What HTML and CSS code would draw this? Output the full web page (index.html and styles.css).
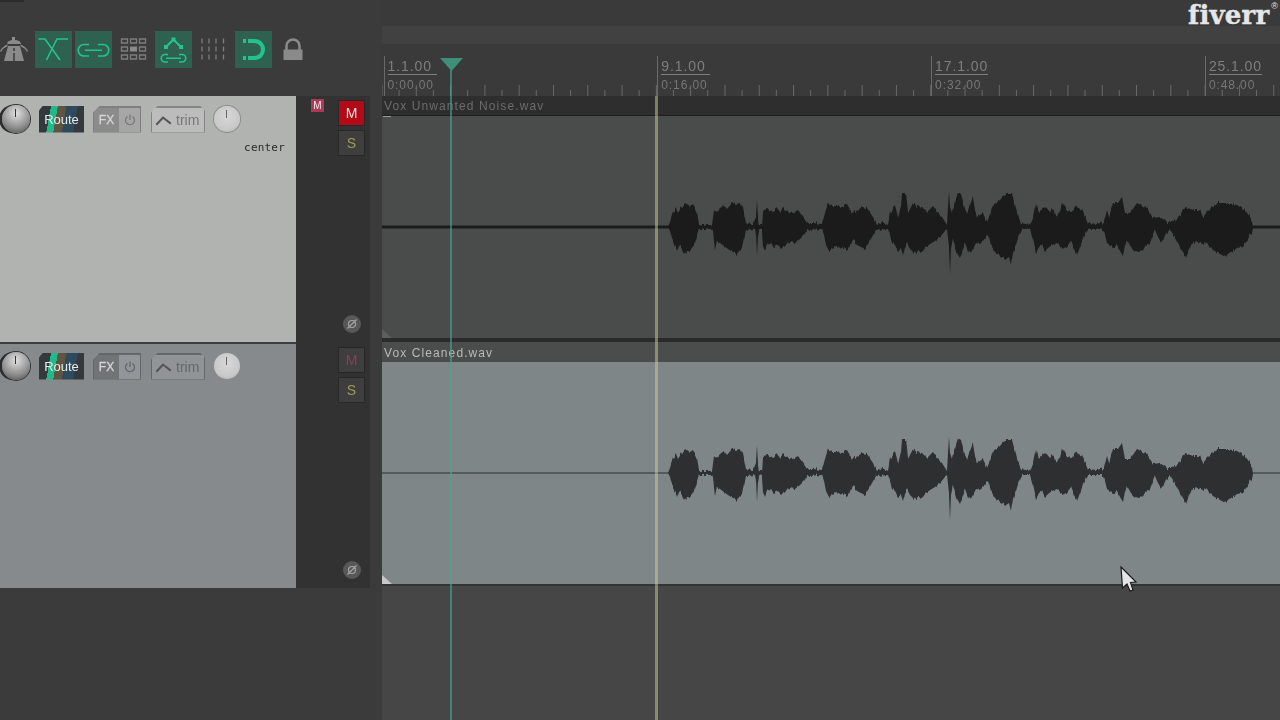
FILE: index.html
```html
<!DOCTYPE html>
<html lang="en">

<head>
    <meta charset="UTF-8">
    <title>Vox Cleaned</title>
    <link rel="stylesheet" href="styles.css">
</head>

<body>
    <div class="app">
        <!-- left column: toolbar and track panels -->
        <div class="side">
            <div class="toolbar">
                <span class="tool road">
                    <svg width="28" height="26" viewBox="0 0 28 26">
                        <path class="g-fill" d="M12 0h3v3h-3zM8 4.500Q14 1 20 4.500L21 7H7zM0 14Q3 8.500 8 7.500L7 9.500Q3 11 1 15zM28 14Q25 8.500 20 7.500L21 9.500Q25 11 27 15zM8 9h12l4 15H4z" />
                        <path class="road-line" d="M14 11v3M14 16v8" />
                    </svg>
                </span>
                <span class="tool on first">
                    <svg width="37" height="37" viewBox="0 0 37 37">
                        <path class="g-line" d="M3.500 8H10L25 29M33 8H22L11.500 29" />
                    </svg>
                </span>
                <span class="tool on">
                    <svg width="37" height="37" viewBox="0 0 37 37">
                        <path class="g-line" d="M14 13.500H9a5.700 5.700 0 0 0 0 11.500h5M23 13.500h5a5.700 5.700 0 0 1 0 11.500h-5M10 19.300h17" />
                    </svg>
                </span>
                <span class="tool plain">
                    <svg width="37" height="37" viewBox="0 0 37 37">
                        <path class="grey-line" d="M6.500 8h6v4h-6zM15.500 8h6v4h-6zM24.500 8h6v4h-6zM6.500 16h6v4h-6zM24.500 16h6v4h-6zM6.500 24h6v4h-6zM15.500 24h6v4h-6zM24.500 24h6v4h-6z" />
                        <path class="g-fill" d="M15 15.500h7v5h-7z" />
                    </svg>
                </span>
                <span class="tool on">
                    <svg width="37" height="37" viewBox="0 0 37 37">
                        <path class="g-line thick" d="M11 16l7.500-7.500L26 16" />
                        <path class="g-solid" d="M9 14h4v4H9zM16.500 6.500h4v4h-4zM24 14h4v4h-4z" />
                        <path class="g-line" d="M13 23.500H10a3.700 3.700 0 0 0 0 7.500h3M24 23.500h3a3.700 3.700 0 0 1 0 7.500h-3M11 27.300h15" />
                    </svg>
                </span>
                <span class="tool plain">
                    <svg width="37" height="37" viewBox="0 0 37 37">
                        <path class="grey-line" d="M7 7.500v5M14 7.500v5M21 7.500v5M28.500 7.500v5M7 15.500v5M14 15.500v5M21 15.500v5M28.500 15.500v5M7 23.500v5M14 23.500v5M21 23.500v5M28.500 23.500v5" />
                    </svg>
                </span>
                <span class="tool on">
                    <svg width="37" height="37" viewBox="0 0 37 37">
                        <path class="g-line magnet" d="M13 10h6c12 0 12 17 0 17h-6" />
                        <path class="g-solid" d="M8 8h3v4H8zM8 25h3v4H8z" />
                    </svg>
                </span>
                <span class="tool plain">
                    <svg width="37" height="37" viewBox="0 0 37 37">
                        <path class="shackle" d="M11.500 19v-4a6.500 6.500 0 0 1 13 0v4" />
                        <path class="g-fill" d="M8.500 18.500h19V29h-19z" />
                    </svg>
                </span>
            </div>

            <div class="track-head one">
                <div class="tcp">
                    <div class="tcp-row">
                        <span class="knob"></span>
                        <span class="route"><b>Route</b></span>
                        <span class="fx"><i>FX</i><em>
                                <svg width="14" height="14" viewBox="0 0 14 14"><path class="pow" d="M4.500 3.500a4.500 4.500 0 1 0 5 0M7 1.500V7" /></svg>
                            </em></span>
                        <span class="trim">
                            <svg width="18" height="12" viewBox="0 0 18 12"><path class="env" d="M2 10l6-6.500 7 5.500" /></svg>
                            trim</span>
                        <span class="knob small"></span>
                    </div>
                    <div class="pan">center</div>
                </div>
                <div class="mcp">
                    <span class="badge">M</span>
                    <span class="btn mute-on">M</span>
                    <span class="btn solo">S</span>
                    <span class="phase"><svg width="12" height="12" viewBox="0 0 12 12"><path class="phase-mark" d="M10.500 1.500l-9 9M9.500 6a3.500 3.500 0 0 1-7 0 3.500 3.500 0 0 1 7 0z" /></svg></span>
                </div>
            </div>

            <div class="track-head two">
                <div class="tcp">
                    <div class="tcp-row">
                        <span class="knob"></span>
                        <span class="route"><b>Route</b></span>
                        <span class="fx"><i>FX</i><em>
                                <svg width="14" height="14" viewBox="0 0 14 14"><path class="pow" d="M4.500 3.500a4.500 4.500 0 1 0 5 0M7 1.500V7" /></svg>
                            </em></span>
                        <span class="trim">
                            <svg width="18" height="12" viewBox="0 0 18 12"><path class="env" d="M2 10l6-6.500 7 5.500" /></svg>
                            trim</span>
                        <span class="knob small"></span>
                    </div>
                </div>
                <div class="mcp">
                    <span class="btn mute">M</span>
                    <span class="btn solo">S</span>
                    <span class="phase"><svg width="12" height="12" viewBox="0 0 12 12"><path class="phase-mark" d="M10.500 1.500l-9 9M9.500 6a3.500 3.500 0 0 1-7 0 3.500 3.500 0 0 1 7 0z" /></svg></span>
                </div>
            </div>
        </div>

        <!-- right column: ruler and items -->
        <div class="arrange">
            <div class="ruler">
                <div class="ruler-band"></div>
                <div class="marks">
                    <div class="mark"><span class="bar-no">1.1.00</span><span class="time">0:00.00</span></div>
                    <div class="mark"><span class="bar-no">9.1.00</span><span class="time">0:16.00</span></div>
                    <div class="mark"><span class="bar-no">17.1.00</span><span class="time">0:32.00</span></div>
                    <div class="mark"><span class="bar-no">25.1.00</span><span class="time">0:48.00</span></div>
                </div>
            </div>

            <svg class="wave-defs" width="0" height="0">
                <defs>
                    <filter id="jag" x="0" y="-30%" width="100%" height="160%" color-interpolation-filters="sRGB">
                        <feTurbulence type="fractalNoise" baseFrequency="0.45 0.002" numOctaves="2" seed="4" />
                        <feColorMatrix values="0 0 0 0 .5  0 1 0 0 0  0 0 0 0 0  0 0 0 0 1" result="noise" />
                        <feDisplacementMap in="SourceGraphic" in2="noise" scale="7" xChannelSelector="R" yChannelSelector="G" />
                    </filter>
                    <g id="wave" filter="url(#jag)">
                        <polygon points="668,0 670,-5 673,-15 676,-19 678,-14 681,-19 683,-22 687,-23 690,-21 693,-23 697,-14 699,-2 712,-2 714,-17 716,-14 720,-19 724,-22 727,-18 732,-24 736,-23 740,-24 743,-19 746,-4 753,-3 756,-10 757,-27 758,-10 759,-2 762,-2 763,-17 768,-18 772,-15 777,-19 780,-15 783,-19 788,-15 793,-14 798,-17 803,-10 807,-4 813,-4 822,-3 825,-14 828,-24 832,-21 837,-21 842,-20 847,-23 852,-14 855,-15 862,-20 867,-19 873,-10 877,-2 882,-5 888,-2 890,-14 895,-22 898,-10 901,-20 902,-34 906,-34 908,-14 913,-24 917,-21 922,-20 927,-15 933,-21 938,-14 942,-10 947,-2 948,-20 949,-36 950,-20 952,-14 955,-25 958,-35 961,-33 964,-20 967,-14 970,-22 973,-30 975,-18 977,-10 983,-14 987,-5 990,-12 993,-22 1000,-27 1005,-33 1012,-33 1015,-22 1017,-14 1021,-4 1030,-2 1033,-10 1036,-24 1039,-14 1045,-21 1050,-15 1053,-18 1057,-10 1060,-16 1062,-25 1067,-17 1072,-14 1075,-21 1082,-17 1086,-9 1088,-4 1097,-3 1104,-5 1107,-17 1109,-10 1113,-24 1118,-24 1122,-30 1125,-14 1130,-14 1137,-24 1147,-19 1153,-9 1160,-10 1167,-5 1172,-5 1178,-9 1185,-20 1193,-17 1200,-17 1203,-10 1207,-15 1212,-20 1217,-24 1222,-24 1227,-24 1232,-23 1237,-22 1245,-17 1252,-7 1253,0" />
                        <polygon points="668,0 670,4 672,12 675,18 677,24 679,18 682,22 685,28 687,24 690,24 692,22 695,16 697,9 699,2 712,2 713,4 715,24 717,14 720,16 724,19 728,22 731,24 735,26 737,28 739,24 742,21 744,12 746,3 755,2 756,8 757,29 758,8 759,2 762,3 763,18 765,24 767,18 770,16 774,20 778,18 782,22 785,18 790,15 795,16 800,12 804,8 807,3 822,2 824,8 826,18 829,24 832,22 835,19 838,21 842,20 847,23 850,18 853,13 857,18 861,20 865,22 868,17 872,10 876,3 888,2 890,8 892,15 895,18 898,24 901,22 903,28 905,20 907,16 910,22 914,26 918,24 922,25 926,20 930,17 935,14 940,10 945,4 947,2 949,20 950,46 951,22 953,12 956,24 960,31 963,22 965,16 968,24 970,27 973,22 976,16 980,17 983,14 986,10 988,8 991,18 995,25 999,28 1002,30 1006,32 1009,30 1011,38 1013,26 1016,18 1019,8 1022,2 1030,2 1033,12 1036,26 1039,20 1042,18 1045,24 1048,21 1052,18 1057,16 1061,20 1065,22 1068,18 1071,14 1074,22 1077,28 1080,20 1083,12 1086,5 1088,2 1103,2 1105,8 1107,16 1110,18 1113,21 1117,18 1120,24 1123,29 1125,18 1127,13 1131,20 1135,24 1140,25 1145,20 1150,16 1153,8 1155,3 1158,10 1161,15 1164,12 1167,5 1170,3 1173,8 1176,12 1180,20 1183,26 1186,30 1189,22 1193,16 1198,15 1203,17 1206,16 1210,20 1213,23 1218,26 1222,28 1225,30 1229,26 1233,24 1237,21 1242,20 1247,14 1250,8 1252,5 1253,0" />
                    </g>
                </defs>
            </svg>

            <div class="lane one">
                <div class="item-title">Vox Unwanted Noise.wav</div>
                <div class="item-body">
                    <span class="tick-top"></span>
                    <svg class="peaks" viewBox="382 -50 898 100" width="898" height="100">
                        <rect class="center-line" x="382" y="-1.500" width="898" height="3" />
                        <use href="#wave" />
                    </svg>
                    <span class="fade"></span>
                </div>
            </div>

            <div class="lane two">
                <div class="item-title">Vox Cleaned.wav</div>
                <div class="item-body">
                    <svg class="peaks" viewBox="382 -50 898 100" width="898" height="100">
                        <rect class="center-line" x="382" y="-0.500" width="898" height="1" />
                        <use href="#wave" />
                    </svg>
                    <span class="fade"></span>
                </div>
            </div>

            <!-- cursors run over the whole arrange view -->
            <div class="edit-cursor"></div>
            <div class="playhead"></div>
            <div class="playhead-cap"></div>
        </div>
    </div>

    <div class="logo">fiverr<sup>®</sup></div>

    <svg class="pointer" width="20" height="28" viewBox="0 0 20 28">
        <path d="M2 1l15 15-5.500.5L14 24l-3 1-3-7-4.500 4z" />
    </svg>
</body>

</html>
```

FILE: styles.css
```css
* {
    box-sizing: border-box;
}

html,
body {
    margin: 0;
    height: 100%;
    overflow: hidden;
    background: #3b3b3b;
}

body {
    position: relative;
    font-family: "Liberation Sans", Arial, sans-serif;
}

.app {
    display: flex;
    width: 1280px;
    height: 720px;
    filter: blur(.35px);
}

.side {
    width: 382px;
    background: #3b3b3b;
}

/* toolbar */
.toolbar {
    position: relative;
    display: flex;
    align-items: flex-start;
    height: 96px;
    padding-top: 31px;
}

.toolbar::before {
    content: "";
    position: absolute;
    left: 0;
    top: 0;
    width: 24px;
    height: 2px;
    background: #2c2c2c;
}

.tool {
    display: block;
    width: 37px;
    height: 37px;
    margin-right: 3px;
}

.tool svg {
    display: block;
}

.tool.road {
    width: 28px;
    margin-right: 7px;
    padding-top: 6px;
}

.tool.on {
    background: #2f6151;
}

.tool.plain {
    margin-right: 3px;
}

.g-fill {
    fill: #8a8a8a;
}

.road-line {
    fill: none;
    stroke: #3b3b3b;
    stroke-width: 1.5;
}

.g-line {
    fill: none;
    stroke: #25c38c;
    stroke-width: 1.600;
}

.g-line.thick {
    stroke-width: 2;
}

.g-line.magnet {
    stroke-width: 4;
}

.g-solid {
    fill: #25c38c;
}

.grey-line {
    fill: none;
    stroke: #7d7d7d;
    stroke-width: 1.300;
}

.shackle {
    fill: none;
    stroke: #8a8a8a;
    stroke-width: 2.500;
}

/* track panels */
.track-head {
    display: flex;
    height: 246px;
}

.tcp {
    width: 296px;
}

.track-head.one .tcp {
    background: #b1b3b1;
}

.track-head.two .tcp {
    background: #868a8c;
    border-top: 2px solid #3c3f41;
}

.tcp-row {
    display: flex;
    align-items: center;
    height: 28px;
    margin-top: 9px;
}

.track-head.two .tcp-row {
    margin-top: 8px;
}

.knob {
    display: block;
    flex: none;
    width: 28px;
    height: 28px;
    margin-left: 2px;
    border-radius: 50%;
    background: radial-gradient(circle at 50% 30%, #e0e0e0, #8d8d8d 60%, #444);
    box-shadow: -3px 0 0 #2c2c2c, 0 0 0 1px #333;
    position: relative;
}

.knob::after {
    content: "";
    position: absolute;
    left: 13px;
    top: 4px;
    width: 1px;
    height: 8px;
    background: #333;
}

.knob.small {
    width: 26px;
    height: 26px;
    margin-left: 9px;
    background: radial-gradient(circle at 50% 40%, #d8d8d8, #c8c8c8 65%, #9a9a9a);
    box-shadow: 0 0 0 1px #8b8b8b;
}

.knob.small::after {
    left: 12px;
    background: #666;
}

.route {
    display: block;
    flex: none;
    width: 45px;
    height: 27px;
    margin-left: 9px;
    text-align: center;
    clip-path: polygon(4px 0, 100% 0, 100% 100%, 0 100%, 0 5px);
    background: linear-gradient(100deg, #33393d 0 24%, #1fb98a 24% 38%, #5f5442 38% 55%, #2f4a5c 55% 78%, #33393d 78%);
}

.route b {
    font-weight: normal;
    font-size: 13px;
    line-height: 27px;
    color: #e8e8e8;
}

.fx {
    display: flex;
    flex: none;
    width: 48px;
    height: 27px;
    margin-left: 9px;
    border: 1px solid #7f7f7f;
    border-top-width: 2px;
    clip-path: polygon(7px 0, 100% 0, 100% 100%, 0 100%, 0 7px);
}

.fx i {
    flex: 1;
    font-style: normal;
    font-size: 12px;
    -webkit-text-stroke: .3px currentColor;
    line-height: 25px;
    text-align: center;
    color: #d5d5d5;
    background: #8b8b8b;
}

.fx em {
    display: flex;
    align-items: center;
    justify-content: center;
    width: 21px;
    background: #a6a6a6;
}

.pow {
    fill: none;
    stroke: #767676;
    stroke-width: 1.200;
}

.trim {
    display: flex;
    flex: none;
    align-items: center;
    gap: 3px;
    width: 54px;
    height: 27px;
    margin-left: 10px;
    padding-left: 3px;
    font-size: 14px;
    color: #787878;
    background: #bcbcbc;
    border: 1px solid #858585;
    border-top-width: 2px;
    clip-path: polygon(7px 0, calc(100% - 5px) 0, 100% 5px, 100% 100%, 0 100%, 0 7px);
}

.env {
    fill: none;
    stroke: #555;
    stroke-width: 2;
    stroke-linecap: square;
}

.pan {
    margin-top: 8px;
    padding-right: 11px;
    text-align: right;
    font-family: "DejaVu Sans Mono", monospace;
    font-size: 11px;
    letter-spacing: .2px;
    color: #2a2a2a;
}

.track-head.two .fx i {
    background: #707476;
}

.track-head.two .fx em {
    background: #92969a;
}

.track-head.two .trim {
    background: #909496;
    color: #63686b;
    border-color: #63686b;
}

.track-head.two .fx {
    border-color: #63686b;
}

.track-head.two .pow {
    stroke: #5f6365;
}

/* mixer strip next to the panel */
.mcp {
    position: relative;
    display: flex;
    flex-direction: column;
    align-items: flex-end;
    width: 74px;
    padding: 4px 5px 9px 0;
    background: #323232;
}

.track-head.two .mcp {
    padding-top: 5px;
}

.badge {
    position: absolute;
    left: 15px;
    top: 3px;
    width: 13px;
    height: 13px;
    font-size: 10px;
    line-height: 13px;
    text-align: center;
    color: #eee;
    background: #ad3a55;
}

.btn {
    display: block;
    width: 27px;
    height: 26px;
    margin-bottom: 4px;
    font-size: 14px;
    line-height: 25px;
    text-align: center;
    background: #3e3e3e;
    border: 1px solid #282828;
}

.btn.mute-on {
    color: #f2e4e4;
    background: #b30a18;
}

.btn.mute {
    color: #8c3f52;
}

.btn.solo {
    color: #9c9c58;
}

.phase {
    display: flex;
    align-items: center;
    justify-content: center;
    width: 18px;
    height: 18px;
    margin-top: auto;
    margin-right: 4px;
    border-radius: 50%;
    background: #585858;
}

.phase-mark {
    fill: none;
    stroke: #a5a5a5;
    stroke-width: 1.200;
}

/* arrange view */
.arrange {
    position: relative;
    flex: 1;
    background: #464646;
    overflow: hidden;
}

.ruler {
    height: 96px;
    padding-top: 26px;
    background: #3a3a3a;
}

.ruler-band {
    height: 18px;
    background: #414141;
}

.marks {
    display: flex;
    height: 40px;
    margin-top: 12px;
    padding-left: 1.500px;
    background-image:
        linear-gradient(90deg, #686868 1px, transparent 1px),
        linear-gradient(90deg, #686868 1px, transparent 1px);
    background-size: 34.300px 11px, 34.300px 6px;
    background-position: 33.800px 100%, 16.600px 100%;
    background-repeat: repeat-x;
}

.mark {
    flex: 0 0 273.800px;
    padding: 2px 0 0 3px;
    border-left: 1px solid #6a6a6a;
}

.bar-no {
    display: table;
    min-width: 49px;
    font-size: 14px;
    line-height: 16px;
    letter-spacing: .9px;
    color: #7e7e7e;
    border-bottom: 1px solid #7e7e7e;
}

.time {
    display: block;
    margin-top: 4px;
    font-size: 12px;
    line-height: 13px;
    letter-spacing: .9px;
    color: #777;
}

.wave-defs {
    position: absolute;
}

.lane {
    height: 246px;
}

.item-title {
    font-size: 12px;
    letter-spacing: 1.100px;
    padding-left: 2px;
}

.item-body {
    position: relative;
    display: flex;
    align-items: center;
}

.peaks {
    display: block;
}

.lane.one .item-title {
    height: 20px;
    line-height: 21px;
    color: #6c6c6c;
    background: #2e2e2e;
    border-bottom: 1px solid #1e1e1e;
}

.lane.one .item-body {
    height: 226px;
    background: #4a4c4c;
    border-bottom: 4px solid #2a2a2a;
}

.lane.one .peaks {
    fill: #1b1b1b;
}

.lane.two .item-title {
    height: 20px;
    line-height: 22px;
    color: #b8bab8;
    background: #4b4d4d;
}

.lane.two .item-body {
    height: 224px;
    background: #7e8688;
    border-bottom: 2px solid #333;
}

.lane.two .peaks {
    fill: #2d2f30;
}

.tick-top {
    position: absolute;
    left: 1px;
    top: 0;
    width: 8px;
    height: 1px;
    background: #9a9a9a;
}

.fade {
    position: absolute;
    left: 0;
    bottom: 0;
    width: 10px;
    height: 9px;
    clip-path: polygon(0 0, 100% 100%, 0 100%);
    background: #5c5e5e;
}

.lane.two .fade {
    background: #c6c9c9;
}

.edit-cursor {
    position: absolute;
    left: 273px;
    top: 96px;
    bottom: 0;
    width: 3px;
    background: rgba(205, 205, 150, .5);
}

.playhead {
    position: absolute;
    left: 68px;
    top: 70px;
    bottom: 0;
    width: 2px;
    background: rgba(70, 170, 145, .6);
}

.playhead-cap {
    position: absolute;
    left: 58px;
    top: 58px;
    width: 23px;
    height: 13px;
    clip-path: polygon(0 0, 100% 0, 50% 100%);
    background: #3f8f78;
}

/* overlays */
.logo {
    position: absolute;
    left: 1188px;
    top: 0;
    font-family: "DejaVu Serif", serif;
    font-weight: bold;
    font-size: 26px;
    line-height: 30px;
    letter-spacing: .2px;
    -webkit-text-stroke: .4px #e6e6e6;
    color: #e6e6e6;
}

.logo sup {
    font-family: "Liberation Sans", sans-serif;
    font-weight: normal;
    -webkit-text-stroke: 0;
    font-size: 9px;
    line-height: 0;
    margin-left: 2px;
    vertical-align: 15px;
}

.pointer {
    position: absolute;
    left: 1119px;
    top: 566px;
}

.pointer path {
    fill: #e3e5e7;
    stroke: #1c1c1c;
    stroke-width: 1.200;
}
```
